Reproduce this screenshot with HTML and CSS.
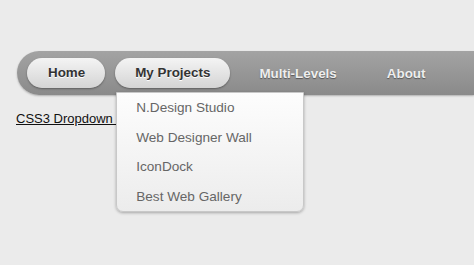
FILE: index.html
```html
<!DOCTYPE html>
<html lang="en">
<head>
    <meta charset="UTF-8">
    <title>CSS3 Dropdown Menu</title>
    <link rel="stylesheet" href="styles.css">
</head>
<body>
    <ul class="nav">
        <li><a class="pill" href="#">Home</a></li>
        <li class="has-sub">
            <a class="pill" href="#">My Projects</a>
            <ul class="sub">
                <li><a href="#">N.Design Studio</a></li>
                <li><a href="#">Web Designer Wall</a></li>
                <li><a href="#">IconDock</a></li>
                <li><a href="#">Best Web Gallery</a></li>
            </ul>
        </li>
        <li><a class="plain" href="#">Multi-Levels</a></li>
        <li><a class="plain" href="#">About</a></li>
    </ul>
    <p class="back"><a href="#">CSS3 Dropdown Menu</a></p>
</body>
</html>
```

FILE: styles.css
```css
body {
    margin: 0;
    padding: 51px 0 0 17px;
    box-sizing: border-box;
    min-height: 265px;
    background: #ebebeb;
    font-family: "Liberation Sans", Arial, sans-serif;
    font-size: 13px;
}
.nav {
    list-style: none;
    margin: 0;
    padding: 0 0 0 10px;
    height: 44px;
    display: flex;
    align-items: center;
    border-radius: 22px 0 0 22px;
    background: linear-gradient(#a3a3a3, #8a8a8a);
    box-shadow: 0 1px 2px rgba(0,0,0,0.25);
    font-size: 13.4px;
}
.nav > li {
    position: relative;
    margin-right: 10px;
}
.nav a {
    text-decoration: none;
    font-weight: bold;
    display: block;
}
.pill {
    height: 30px;
    line-height: 30px;
    padding: 0 20px;
    border-radius: 15px;
    color: #333;
    background: linear-gradient(#f4f4f4, #d4d4d4);
    box-shadow: 0 1px 2px rgba(0,0,0,0.35);
    text-shadow: 0 1px 0 #fff;
}
.nav > li:first-child .pill {
    padding: 0 20px 0 21px;
}
.plain {
    color: #eee;
    padding: 0 21px;
    text-shadow: 0 1px 1px #555;
}
.nav > li:nth-child(3) .plain {
    padding-left: 19px;
    padding-right: 21px;
}
.nav > li:nth-child(4) .plain {
    padding-left: 19px;
}
.sub {
    position: absolute;
    left: 1px;
    top: 34px;
    width: 186px;
    list-style: none;
    margin: 0;
    padding: 0;
    background: linear-gradient(#fdfdfd, #ececec);
    border: 1px solid #c8c8c8;
    border-radius: 0 0 7px 7px;
    box-shadow: 0 1px 3px rgba(0,0,0,0.3);
    z-index: 2;
}
.sub li a {
    font-weight: normal;
    font-size: 13.6px;
    color: #666;
    padding: 0 19px;
    height: 29.5px;
    line-height: 29.5px;
}
.back {
    margin: 16px 0 0 -1px;
}
.back a {
    color: #111;
}
```
